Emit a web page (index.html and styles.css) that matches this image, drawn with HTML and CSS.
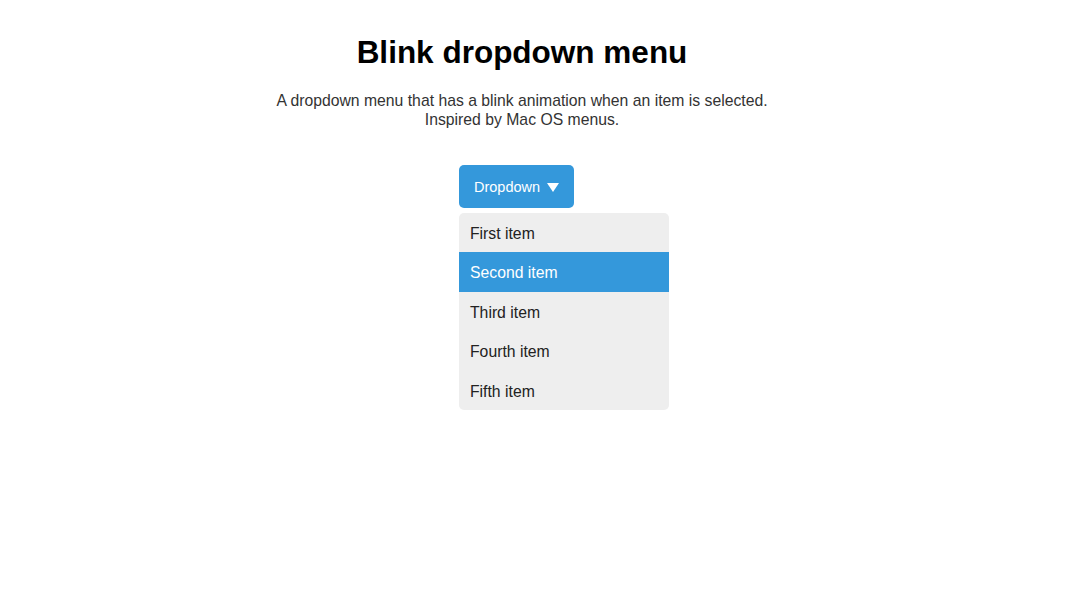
FILE: index.html
```html
<!DOCTYPE html>
<html lang="en">
<head>
<meta charset="utf-8">
<title>Blink dropdown menu</title>
<link rel="stylesheet" href="styles.css">
</head>
<body>
<main class="page">
  <h1 class="title">Blink dropdown menu</h1>
  <p class="lead">A dropdown menu that has a blink animation when an item is selected.<br>Inspired by Mac OS menus.</p>
  <div class="dd-row">
    <div class="dd">
      <button class="dd-toggle" type="button">Dropdown <span class="dd-caret"></span></button>
      <ul class="dd-list">
        <li class="dd-item">First item</li>
        <li class="dd-item dd-item-active">Second item</li>
        <li class="dd-item">Third item</li>
        <li class="dd-item">Fourth item</li>
        <li class="dd-item">Fifth item</li>
      </ul>
    </div>
  </div>
</main>
</body>
</html>
```
FILE: styles.css
```css
html, body {
  margin: 0;
  padding: 0;
  background: #fff;
}
body {
  font-family: "Liberation Sans", Arial, sans-serif;
  color: #333;
}
.page {
  width: 1044px;
  padding-top: 32px;
  text-align: center;
}
.title {
  margin: 0;
  font-size: 31.5px;
  line-height: 40px;
  font-weight: bold;
  color: #000;
}
.lead {
  margin: 19px 0 0;
  font-size: 15.75px;
  line-height: 19px;
  color: #333;
}
.dd-row {
  display: flex;
  justify-content: center;
  margin-top: 36px;
}
.dd {
  display: flex;
  flex-direction: column;
  align-items: flex-start;
  width: 126px;
  text-align: left;
}
.dd-toggle {
  display: inline-flex;
  align-items: center;
  gap: 7px;
  height: 43px;
  padding: 0 15px;
  margin: 0;
  border: 0;
  border-radius: 5px;
  background: #3498db;
  color: #fff;
  font-family: "Liberation Sans", Arial, sans-serif;
  font-size: 14.5px;
}
.dd-caret {
  display: block;
  width: 0;
  height: 0;
  border-left: 6px solid transparent;
  border-right: 6px solid transparent;
  border-top: 9px solid #fff;
  margin-top: 1px;
}
.dd-list {
  display: block;
  flex: none;
  width: 210px;
  margin: 5px 0 0;
  padding: 0;
  list-style: none;
  background: #eee;
  border-radius: 5px;
  overflow: hidden;
}
.dd-item {
  display: block;
  padding: 11px 10px 9px 11px;
  font-size: 15.75px;
  line-height: 19.4px;
  color: #222;
}
.dd-item-active {
  background: #3498db;
  color: #fff;
}
```
